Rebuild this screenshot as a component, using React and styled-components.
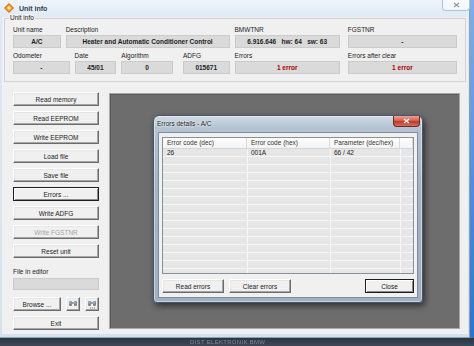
import React from 'react';
import styled, { createGlobalStyle } from 'styled-components';

const GlobalStyle = createGlobalStyle`
  html, body {
    margin: 0;
    padding: 0;
    background: #323c48;
  }
  body {
    font-family: "Liberation Sans", Arial, sans-serif;
  }
`;

const UI_FONT = '"Liberation Sans", Arial, sans-serif';

const Screen = styled.div`
  width: 474px;
  height: 346px;
  overflow: hidden;
  display: flex;
  flex-direction: column;
  background: #323c48;
`;

const Desktop = styled.div`
  display: flex;
  height: 338px;
  background: linear-gradient(to bottom, #7fb0e6, #2f73c8);
`;

const Window = styled.div`
  box-sizing: border-box;
  width: 470px;
  height: 338px;
  display: flex;
  flex-direction: column;
  padding: 0 1px 3px 2px;
  background: linear-gradient(to bottom, #eef4fa 0, #dce8f4 20px, #d3e2f1 100%);
  border-right: 1px solid #8aa2bc;
  border-bottom: 1px solid #8aa2bc;
`;

const TitleBar = styled.div`
  height: 17px;
  display: flex;
  align-items: flex-start;
  padding-left: 2px;
`;

const TitleIcon = styled.svg`
  width: 10px;
  height: 10px;
  margin-top: 3px;
`;

const TitleText = styled.span`
  margin-left: 5px;
  margin-top: 4px;
  font: bold 7px ${UI_FONT};
  line-height: 9px;
  color: #2a3a50;
  text-shadow: 0 0 3px #ffffff;
`;

const TitleClose = styled.div`
  margin-left: auto;
  margin-right: -2px;
  width: 28px;
  height: 11px;
  box-sizing: border-box;
  display: flex;
  align-items: center;
  justify-content: center;
  border: 1px solid #b4c2d1;
  border-top: none;
  border-radius: 0 0 4px 4px;
  background: rgba(255, 255, 255, 0.5);
`;

const Client = styled.div`
  flex: 1;
  display: flex;
  flex-direction: column;
  background: #f0f0f0;
`;

const GroupBox = styled.div`
  position: relative;
  margin: 1px 2px 0 2px;
  padding: 7px 8px 7px 8px;
  border: 1px solid #d2d2d2;
  display: flex;
  flex-direction: column;
  gap: 4px;
`;

const Legend = styled.span`
  position: absolute;
  top: -5px;
  left: 4px;
  padding: 0 1px;
  background: #f0f0f0;
  font: 6.5px ${UI_FONT};
  line-height: 8px;
  color: #222;
`;

const FieldRow = styled.div`
  display: flex;
`;

const Field = styled.div`
  display: flex;
  flex-direction: column;
  width: ${p => p.$w}px;
  margin-left: ${p => p.$ml || 0}px;
`;

const FieldLabel = styled.span`
  font: 6.5px ${UI_FONT};
  line-height: 8px;
  color: #222;
  white-space: nowrap;
`;

const ValueBox = styled.div`
  box-sizing: border-box;
  height: 13px;
  margin-top: 1px;
  display: flex;
  align-items: center;
  justify-content: center;
  background: #dadada;
  border: 1px solid #cbcbcb;
  font: bold 6.5px ${UI_FONT};
  color: ${p => (p.$red ? '#a80000' : '#1c1c1c')};
  white-space: pre;
`;

const MainRow = styled.div`
  display: flex;
  align-items: flex-start;
  gap: 10px;
  margin-top: 10px;
  padding-left: 11px;
`;

const SideColumn = styled.div`
  width: 86px;
  display: flex;
  flex-direction: column;
`;

const ButtonStack = styled.div`
  display: flex;
  flex-direction: column;
  gap: 5px;
  margin-top: ${p => p.$mt || 0}px;
`;

const Button = styled.button`
  box-sizing: border-box;
  height: 14px;
  width: ${p => (p.$w ? `${p.$w}px` : '100%')};
  padding: 0;
  display: flex;
  align-items: center;
  justify-content: center;
  font: 6.5px ${UI_FONT};
  color: ${p => (p.disabled ? '#a4a4a4' : '#222')};
  background: #f0f0f0;
  border: 1px solid;
  border-color: ${p => (p.$default ? '#1e1e1e' : '#ffffff #6c6c6c #6c6c6c #ffffff')};
  box-shadow: ${p =>
    p.$default
      ? 'inset 1px 1px 0 #ffffff, inset -1px -1px 0 #8a8a8a'
      : 'inset -1px -1px 0 #a6a6a6, inset 1px 1px 0 #e6e6e6'};
  white-space: nowrap;
`;

const FileSection = styled.div`
  display: flex;
  flex-direction: column;
  gap: 2px;
  margin-top: 10px;
`;

const FileInput = styled.div`
  box-sizing: border-box;
  height: 12px;
  background: #dadada;
  border: 1px solid #cbcbcb;
`;

const BrowseRow = styled.div`
  display: flex;
  gap: 5px;
`;

const Workspace = styled.div`
  box-sizing: border-box;
  width: 351px;
  height: 236px;
  margin-top: 1px;
  padding: 21px 0 0 43px;
  background: #6d6d6d;
  border: 1px solid #a9a9a9;
  box-shadow: inset 1px 1px 0 #5a5a5a;
`;

const Dialog = styled.div`
  box-sizing: border-box;
  width: 270px;
  height: 188px;
  display: flex;
  flex-direction: column;
  border: 1px solid #48586a;
  border-radius: 6px 6px 4px 4px;
  background: linear-gradient(to bottom, #cfdae5 0, #b4c3d2 12px, #a3b3c4 40%, #9fb0c2 100%);
  box-shadow: 2px 3px 6px rgba(0, 0, 0, 0.55), inset 0 0 0 1px rgba(255, 255, 255, 0.45);
`;

const DialogTitle = styled.div`
  height: 16px;
  display: flex;
  align-items: flex-start;
  padding-left: 3px;
`;

const DialogTitleText = styled.span`
  margin-top: 4px;
  font: 6.5px ${UI_FONT};
  line-height: 8px;
  color: #1a1a1a;
  text-shadow: 0 0 4px #ffffff, 0 0 2px #ffffff;
`;

const RedClose = styled.div`
  margin-left: auto;
  margin-right: 2px;
  width: 27px;
  height: 11px;
  box-sizing: border-box;
  display: flex;
  align-items: center;
  justify-content: center;
  border: 1px solid #6d2a22;
  border-top: none;
  border-radius: 0 0 4px 4px;
  background: linear-gradient(to bottom, #eaa497 0, #d8624f 45%, #c1392a 55%, #d2705c 100%);
`;

const DialogClient = styled.div`
  flex: 1;
  display: flex;
  flex-direction: column;
  margin: 0 4px 4px 4px;
  padding: 4px 3px 4px 3px;
  background: #f0f0f0;
  border: 1px solid #7d8c9c;
`;

const ListView = styled.div`
  box-sizing: border-box;
  height: 137px;
  display: flex;
  flex-direction: column;
  border: 1px solid #8a9098;
  background: #e8e8e8;
`;

const COLS = '84px 83px 70px 1fr';

const ListHeader = styled.div`
  display: grid;
  grid-template-columns: ${COLS};
  height: 10px;
  background: linear-gradient(to bottom, #ffffff, #f2f3f5);
  border-bottom: 1px solid #d5d5d5;
`;

const HeaderCell = styled.div`
  padding-left: 4px;
  border-right: 1px solid #dadada;
  font: 6.5px ${UI_FONT};
  line-height: 10px;
  color: #333;
  white-space: nowrap;
`;

const ListBody = styled.div`
  flex: 1;
  display: grid;
  grid-template-columns: ${COLS};
  grid-auto-rows: 8px;
  background:
    linear-gradient(to right,
      transparent 84px, #f7f7f7 84px, #f7f7f7 85px, transparent 85px,
      transparent 167px, #f7f7f7 167px, #f7f7f7 168px, transparent 168px,
      transparent 237px, #f7f7f7 237px, #f7f7f7 238px, transparent 238px),
    repeating-linear-gradient(to bottom, #e6e6e6 0, #e6e6e6 7px, #f6f6f6 7px, #f6f6f6 8px);
`;

const Cell = styled.div`
  padding-left: 4px;
  font: 6.5px ${UI_FONT};
  line-height: 8px;
  color: #222;
  white-space: nowrap;
`;

const DialogButtons = styled.div`
  display: flex;
  gap: 5px;
  margin-top: 5px;
`;

const Spacer = styled.div`
  flex: 1;
`;

const Taskbar = styled.div`
  flex: 1;
  display: flex;
  align-items: center;
  padding-left: 190px;
  background: linear-gradient(to bottom, #2c3440, #3e4957);
`;

const TaskbarText = styled.span`
  font: 6px ${UI_FONT};
  color: #7e8896;
  letter-spacing: 0.3px;
  filter: blur(0.4px);
`;

const Binoculars = ({ dots }) => (
  <svg width="10" height="9" viewBox="0 0 10 9">
    <rect x="1" y="1" width="3" height="5" rx="1" fill="#7d8894" />
    <rect x="6" y="1" width="3" height="5" rx="1" fill="#7d8894" />
    <rect x="3.5" y="2" width="3" height="2" fill="#98a2ac" />
    <rect x="1.5" y="1.5" width="1" height="2" fill="#c6cdd4" />
    <rect x="6.5" y="1.5" width="1" height="2" fill="#c6cdd4" />
    {dots && (
      <g fill="#6c7680">
        <rect x="3" y="7.5" width="1" height="1" />
        <rect x="5" y="7.5" width="1" height="1" />
        <rect x="7" y="7.5" width="1" height="1" />
      </g>
    )}
  </svg>
);

const rowOne = [
  { label: 'Unit name', value: 'A/C', w: 48 },
  { label: 'Description', value: 'Heater and Automatic Conditioner Control', w: 165, ml: 5 },
  { label: 'BMWTNR', value: '6.916.646   hw: 64   sw: 63', w: 106, ml: 5 },
  { label: 'FGSTNR', value: '-', w: 110, ml: 8 },
];

const rowTwo = [
  { label: 'Odometer', value: '-', w: 57 },
  { label: 'Date', value: '45/01', w: 42, ml: 5 },
  { label: 'Algorithm', value: '0', w: 52, ml: 5 },
  { label: 'ADFG', value: '015671', w: 47, ml: 10 },
  { label: 'Errors', value: '1 error', w: 106, ml: 5, red: true },
  { label: 'Errors after clear', value: '1 error', w: 110, ml: 8, red: true },
];

const sideButtons = [
  { label: 'Read memory' },
  { label: 'Read EEPROM' },
  { label: 'Write EEPROM' },
  { label: 'Load file' },
  { label: 'Save file' },
  { label: 'Errors ...', isDefault: true },
  { label: 'Write ADFG' },
  { label: 'Write FGSTNR', disabled: true },
  { label: 'Reset unit' },
];

const columns = ['Error code (dec)', 'Error code (hex)', 'Parameter (dec/hex)', ''];
const errors = [['26', '001A', '66 / 42', '']];

const renderRow = fields => (
  <FieldRow>
    {fields.map(f => (
      <Field key={f.label} $w={f.w} $ml={f.ml}>
        <FieldLabel>{f.label}</FieldLabel>
        <ValueBox $red={f.red}>{f.value}</ValueBox>
      </Field>
    ))}
  </FieldRow>
);

const App = () => {
  return (
    <>
      <GlobalStyle />
      <Screen>
        <Desktop>
          <Window>
            <TitleBar>
              <TitleIcon viewBox="0 0 10 10">
                <polygon points="5,0 10,5 5,10 0,5" fill="#d9731a" />
                <polygon points="5,1.5 8.5,5 5,8.5 1.5,5" fill="#f3a53a" />
                <polygon points="5,3 7,5 5,7 3,5" fill="#ffe08a" />
              </TitleIcon>
              <TitleText>Unit info</TitleText>
              <TitleClose>
                <svg width="7" height="6" viewBox="0 0 7 6">
                  <path d="M1 1 L6 5 M6 1 L1 5" stroke="#8f9aa6" strokeWidth="1.2" />
                </svg>
              </TitleClose>
            </TitleBar>

            <Client>
              <GroupBox>
                <Legend>Unit info</Legend>
                {renderRow(rowOne)}
                {renderRow(rowTwo)}
              </GroupBox>

              <MainRow>
                <SideColumn>
                  <ButtonStack>
                    {sideButtons.map(b => (
                      <Button key={b.label} $default={b.isDefault} disabled={b.disabled}>
                        {b.label}
                      </Button>
                    ))}
                  </ButtonStack>

                  <FileSection>
                    <FieldLabel>File in editor</FieldLabel>
                    <FileInput />
                  </FileSection>

                  <ButtonStack $mt={7}>
                    <BrowseRow>
                      <Button $w={48}>Browse ...</Button>
                      <Button $w={14}>
                        <Binoculars />
                      </Button>
                      <Button $w={14}>
                        <Binoculars dots />
                      </Button>
                    </BrowseRow>
                    <Button>Exit</Button>
                  </ButtonStack>
                </SideColumn>

                <Workspace>
                  <Dialog>
                    <DialogTitle>
                      <DialogTitleText>Errors details - A/C</DialogTitleText>
                      <RedClose>
                        <svg width="7" height="6" viewBox="0 0 7 6">
                          <path d="M1 1 L6 5 M6 1 L1 5" stroke="#ffffff" strokeWidth="1.4" />
                        </svg>
                      </RedClose>
                    </DialogTitle>
                    <DialogClient>
                      <ListView>
                        <ListHeader>
                          {columns.map((c, i) => (
                            <HeaderCell key={i}>{c}</HeaderCell>
                          ))}
                        </ListHeader>
                        <ListBody>
                          {errors.map((row, r) =>
                            row.map((v, i) => <Cell key={`${r}-${i}`}>{v}</Cell>)
                          )}
                        </ListBody>
                      </ListView>
                      <DialogButtons>
                        <Button $w={62}>Read errors</Button>
                        <Button $w={62}>Clear errors</Button>
                        <Spacer />
                        <Button $w={49} $default>
                          Close
                        </Button>
                      </DialogButtons>
                    </DialogClient>
                  </Dialog>
                </Workspace>
              </MainRow>
            </Client>
          </Window>
        </Desktop>
        <Taskbar>
          <TaskbarText>DIST ELEKTRONIK BMW</TaskbarText>
        </Taskbar>
      </Screen>
    </>
  );
};

export default App;
